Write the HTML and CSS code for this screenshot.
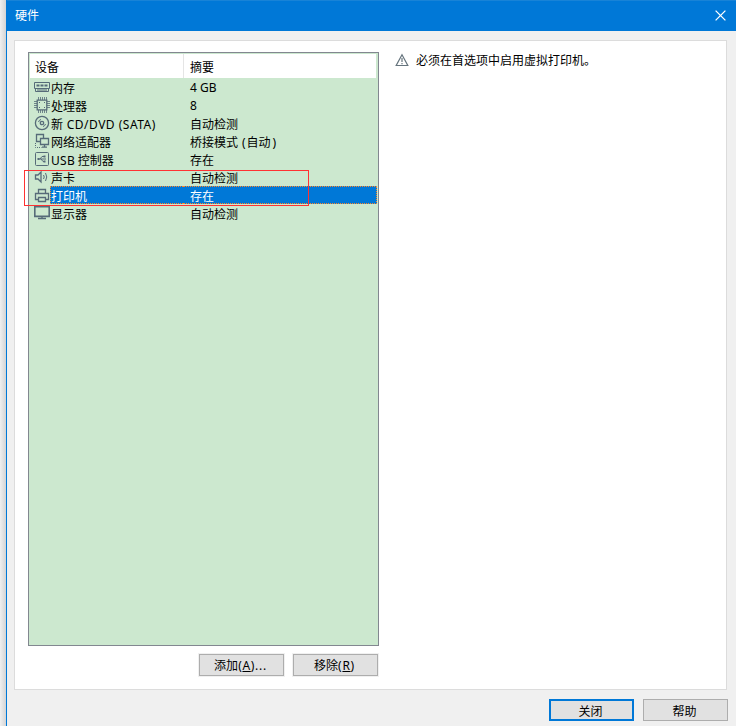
FILE: index.html
```html
<!DOCTYPE html>
<html lang="zh-CN">
<head>
<meta charset="utf-8">
<title>硬件</title>
<link rel="stylesheet" href="styles.css">
</head>
<body>
<div class="window">
  <header class="titlebar"><span>硬件</span>
    <svg class="close" width="11" height="11" viewBox="0 0 11 11"><path d="M.6.6l9.8 9.8M10.4.6L.6 10.4"/></svg>
  </header>
  <main class="panel">
    <section class="devices">
      <div class="list">
        <div class="head"><div class="name">设备</div><div class="summary">摘要</div></div>
        <div class="row"><svg class="icon" viewBox="0 0 16 18"><path d="M.5 4.5h15v6h-15zM1.5 10.5v3h13v-3M3 12h10" /><path class="thick" d="M2.5 7.5h3M6.5 7.5h3M10.5 7.5h3"/></svg><div class="name">内存</div><div class="summary latin">4 GB</div></div>
        <div class="row"><svg class="icon" viewBox="0 0 16 18"><path class="bold" d="M3.2 4.2h9.6v9.6h-9.6z"/><path d="M5 6.5h1M10 6.5h1M5 11.5h1M10 11.5h1"/><path class="dots" d="M4.5 1v3M6.5 1v3M8.5 1v3M10.5 1v3M12.5 1v3M4.5 14v3M6.5 14v3M8.5 14v3M10.5 14v3M12.5 14v3M0 5.5h3M0 7.5h3M0 9.5h3M0 11.5h3M13 5.5h3M13 7.5h3M13 9.5h3M13 11.5h3"/></svg><div class="name">处理器</div><div class="summary latin">8</div></div>
        <div class="row"><svg class="icon" viewBox="0 0 16 18"><circle class="bold" cx="8" cy="9" r="6.6"/><circle class="bold" cx="8" cy="9" r="1.7"/><path d="M4.5 8Q5 6 7 5.5M11.5 10Q11 12 9 12.5"/></svg><div class="name">新 <span class="latin disc">CD/DVD (SATA)</span></div><div class="summary">自动检测</div></div>
        <div class="row"><svg class="icon" viewBox="0 0 16 18"><path class="bold" d="M6.5 9.5h-4v-7h7v4M6.5 6.5h8v6h-8zM8 15.2h5M10.5 12.5v2"/><path class="dash" d="M1.5 11v4.5h6"/></svg><div class="name">网络适配器</div><div class="summary">桥接模式<span class="latin auto"> (</span>自动<span class="latin close-paren">)</span></div></div>
        <div class="row"><svg class="icon" viewBox="0 0 16 18"><rect x="1.5" y="2.5" width="13" height="13" rx="1"/><path d="M4 9h8M6 9l2-2.5h2M7 9l2 2.5h2"/><path class="thick" d="M3.5 9h2M9.5 6.5h2M9.5 11.5h2"/></svg><div class="name"><span class="latin usb">USB</span> 控制器</div><div class="summary">存在</div></div>
        <div class="row"><svg class="icon" viewBox="0 0 16 18"><path class="bold" d="M1.5 7h2.5l3-3v10l-3-3h-2.5z"/><path d="M9.5 7q1.5 2 0 4M11.5 5q2.5 4 0 8"/></svg><div class="name">声卡</div><div class="summary">自动检测</div></div>
        <div class="row selected"><svg class="icon" viewBox="0 0 16 18"><path class="bold" d="M4.5 7.5v-4h7v4M4.5 13.5h-3v-6h13v6h-3M4.5 11.5h7v4h-7z"/></svg><div class="name">打印机</div><div class="summary">存在</div></div>
        <div class="row"><svg class="icon" viewBox="0 0 16 18"><path class="monitor" d="M.8 2.8h14.4v9.6h-14.4z"/><path class="bold" d="M4 14.5h8M8 13v1"/></svg><div class="name">显示器</div><div class="summary">自动检测</div></div>
        <div class="highlight"></div>
      </div>
      <div class="actions"><button>添加<span class="latin key">(<u>A</u>)...</span></button><button>移除<span class="latin key">(<u>R</u>)</span></button></div>
    </section>
    <section class="notice"><svg width="14" height="14" viewBox="0 0 14 14"><path d="M7 1.8L12.8 12.5H1.2zM7 5v4M7 10v1.3"/></svg><span>必须在首选项中启用虚拟打印机。</span></section>
  </main>
  <footer><button class="default">关闭</button><button>帮助</button></footer>
</div>
</body>
</html>
```
FILE: styles.css
```css
* { box-sizing: border-box; }
body {
  margin: 0;
  height: 726px;
  overflow: hidden;
  padding-left: 6px;
  background: linear-gradient(90deg, #f0f0f0, #d4d4d4 6px);
  font: 12px/18px "Noto Sans CJK SC", sans-serif;
  color: #000;
}
.window { height: 726px; border-left: 1px solid #0078d7; background: #f0f0f0; }
.titlebar {
  height: 31px;
  background: #0078d7;
  border-top: 1px solid #1883d7;
  color: #fff;
  display: flex;
  justify-content: space-between;
  padding: 5px 10px 0 8px;
}
.close { margin-top: 4px; fill: none; stroke: #fff; stroke-width: 1.3; }
.panel {
  margin: 9px 9px 0 7px;
  height: 650px;
  background: #fff;
  border: 1px solid #dcdcdc;
  display: flex;
  padding: 11px 0 0 13px;
}
.devices { width: 351px; }
.list {
  position: relative;
  height: 594px;
  background: #cce8cf;
  border: 1px solid #828790;
  padding: 1px;
}
.head { display: flex; height: 24px; margin-right: 1px; background: #fff; line-height: 26px; }
.head .name { width: 154px; padding-left: 5px; border-right: 1px solid #e5e5e5; }
.head .summary { padding-left: 6px; }
.row { display: flex; height: 18px; padding-left: 4px; line-height: 20px; white-space: nowrap; }
.row .name { width: 133px; padding-left: 1px; }
.row .summary { flex: 1; padding-left: 7px; }
.icon { width: 16px; height: 18px; flex: none; fill: none; stroke: #566b78; stroke-width: 1; }
.icon .thick { stroke-width: 2; }
.icon .bold { stroke-width: 1.3; }
.icon .monitor { stroke-width: 1.6; }
.icon .dots { stroke-width: .8; }
.icon .dash { stroke-dasharray: 1 1; }
.selected .name, .selected .summary {
  background: #0078d7;
  color: #fff;
  border: 1px dotted #ff8728;
  border-width: 1px 0;
  line-height: 18px;
}
.selected .name { border-left-width: 1px; padding-left: 0; }
.selected .summary { border-right-width: 1px; }
.latin { font-family: "Noto Sans", sans-serif; }
.summary.latin { line-height: 19px; }
.disc { letter-spacing: .5px; margin-left: 1px; }
.usb { letter-spacing: .3px; }
.auto { white-space: pre; letter-spacing: .9px; }
.close-paren { margin-left: 2px; }
.highlight { position: absolute; left: -5px; top: 117px; width: 285px; height: 36px; border: 1px solid #ff3232; }
.actions { display: flex; justify-content: flex-end; gap: 9px; margin: 8px 1px 0 0; }
button {
  width: 85px;
  height: 22px;
  padding: 1px 2px 0 0;
  border: 1px solid #adadad;
  background: #e1e1e1;
  color: #000;
  font: inherit;
}
.actions button { box-shadow: 0 0 0 1px #f0f0f0; }
.key { letter-spacing: .7px; }
.notice { display: flex; gap: 7px; margin: -1px 0 0 16px; height: 18px; }
.notice svg { margin-top: 2px; fill: none; stroke: #65747d; stroke-width: 1.2; }
footer { display: flex; justify-content: flex-end; gap: 9px; padding: 9px 8px 0 0; }
.default { border: 2px solid #0078d7; }
```
